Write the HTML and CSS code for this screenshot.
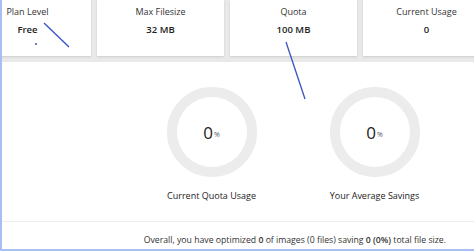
FILE: index.html
```html
<!DOCTYPE html>
<html>
	<head>
		<meta charset="utf-8">
		<title>Dashboard</title>
		<link rel="stylesheet" href="styles.css">
	</head>
	<body>
		<div class="page">
			<div class="stats">
				<div class="card">
					<span class="label">Plan Level</span>
					<span class="value">Free</span>
				</div>
				<div class="card">
					<span class="label">Max Filesize</span>
					<span class="value">32 MB</span>
				</div>
				<div class="card">
					<span class="label">Quota</span>
					<span class="value">100 MB</span>
				</div>
				<div class="card">
					<span class="label">Current Usage</span>
					<span class="value">0</span>
				</div>
			</div>
			<div class="charts">
				<div class="chart">
					<div class="donut">
						<span class="num">0</span><span class="pct">%</span>
					</div>
					<span class="caption">Current Quota Usage</span>
				</div>
				<div class="chart">
					<div class="donut">
						<span class="num">0</span><span class="pct">%</span>
					</div>
					<span class="caption">Your Average Savings</span>
				</div>
			</div>
			<p class="summary">Overall, you have optimized <b>0</b> of images (0 files) saving <b>0 (0%)</b> total file size.</p>

			<!-- 截图上的标注箭头 -->
			<svg class="marks" width="474" height="251" viewBox="0 0 474 251">
				<line x1="44" y1="23" x2="69" y2="47" />
				<circle cx="36" cy="44" r="1" />
				<line x1="286" y1="42" x2="305" y2="99" />
			</svg>
		</div>
	</body>
</html>
```
FILE: styles.css
```css
*{
    margin: 0;
    padding: 0;
    box-sizing: border-box;
}
body{
    font-family: "Open Sans", Arial, sans-serif;
    color: #222;
    background-color: #fff;
}
.page{
    position: relative;
    width: 474px;
    height: 251px;
    overflow: hidden;
    border-left: 2px solid #a9bdf3;
    border-bottom: 2px solid #a9c0f3;
}
.stats{
    display: grid;
    grid-template-columns: repeat(4, 127px);
    column-gap: 6px;
    margin-left: -38px;
    padding-bottom: 6px;
    background-color: #e9e9e9;
}
.card{
    display: flex;
    flex-direction: column;
    align-items: center;
    height: 56px;
    padding-top: 5px;
    background-color: #fff;
    box-shadow: 0 1px 2px rgba(0,0,0,0.12);
}
.card .label{
    font-size: 9px;
    color: #333;
}
.card .value{
    margin-top: 5px;
    font-size: 9.5px;
    font-weight: 600;
}
.charts{
    display: flex;
    height: 160px;
    padding-left: 128px;
    border-bottom: 1px solid #eeeeee;
}
.chart{
    display: flex;
    flex-direction: column;
    align-items: center;
    width: 163px;
    padding-top: 25px;
}
.donut{
    display: flex;
    align-items: center;
    justify-content: center;
    width: 90px;
    height: 90px;
    border: 10px solid #ececec;
    border-radius: 50%;
}
.donut .num{
    font-size: 17px;
    line-height: 1;
}
.donut .pct{
    margin-top: 4px;
    margin-left: 1px;
    font-size: 7px;
    color: #555;
}
.caption{
    margin-top: 12px;
    font-size: 9px;
    color: #222;
}
.summary{
    padding: 12px 28px 0 0;
    text-align: right;
    font-size: 8.7px;
    color: #333;
}
.summary b{
    font-weight: 600;
}
.marks{
    position: absolute;
    left: -2px;
    top: 0;
}
.marks line{
    stroke: #3651c4;
    stroke-width: 1.3;
}
.marks circle{
    fill: #3651c4;
}
```
